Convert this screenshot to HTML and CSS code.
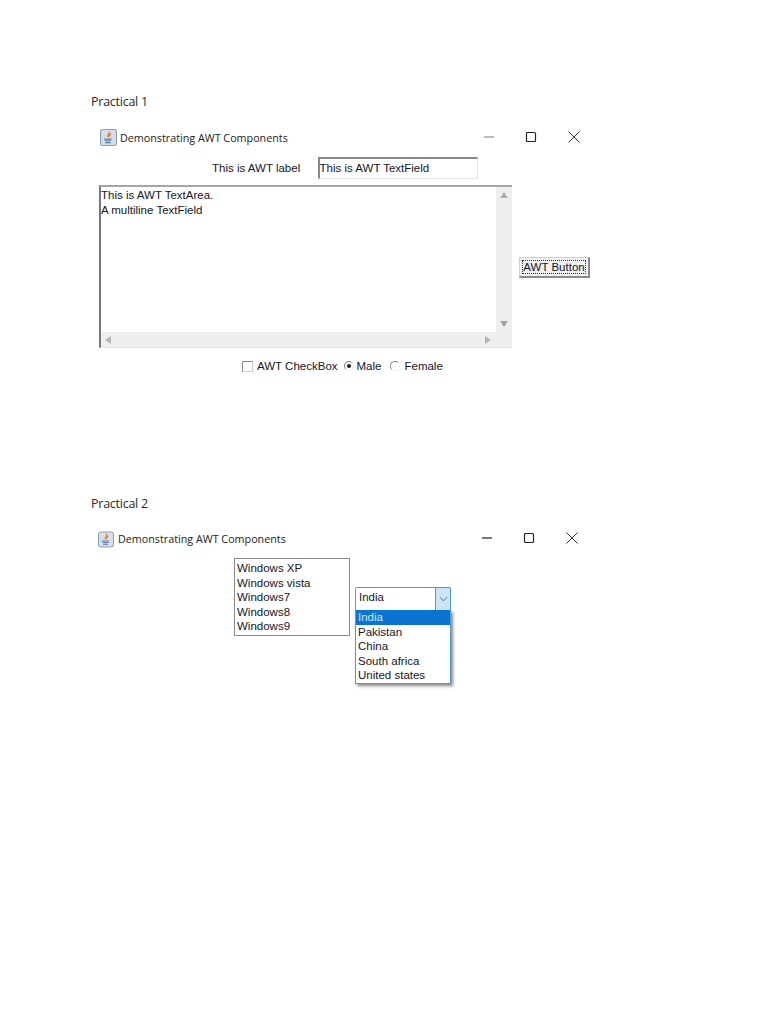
FILE: index.html
```html
<!DOCTYPE html>
<html lang="en">
<head>
<meta charset="utf-8">
<title>Practical</title>
<link rel="stylesheet" href="styles.css">
</head>
<body>
<main class="page">
  <section class="practical first">
    <h2 class="heading">Practical 1</h2>
    <div class="window">
      <div class="titlebar">
        <svg class="java" viewBox="0 0 16 16"><rect x=".5" y=".5" width="15" height="15" rx="2" fill="#d5dfea" stroke="#8d9db0"/><path d="M8.500 2.500c1 2-2 3-1 5M10 4c0 2-2 2-1.500 3.500" fill="none" stroke="#e8762c" stroke-width="1.200"/><path d="M4 9.500h7M4.500 11h6M5 12.800h5" stroke="#5b7ea6" stroke-width="1"/></svg>
        <span class="title">Demonstrating AWT Components</span>
        <span class="controls">
          <svg viewBox="0 0 14 14"><path d="M2 7h10" stroke="#777" stroke-width="1"/></svg>
          <svg viewBox="0 0 14 14"><rect x="2.500" y="2.500" width="9" height="9" rx="1" fill="none" stroke="#222" stroke-width="1.200"/></svg>
          <svg viewBox="0 0 14 14"><path d="M1.500 1.500l11 11M12.500 1.500l-11 11" stroke="#333" stroke-width="1"/></svg>
        </span>
      </div>
      <div class="label-row">
        <span class="label">This is AWT label</span>
        <span class="textfield">This is AWT TextField</span>
      </div>
      <div class="area-row">
        <div class="textarea">
          <div class="area-main">
            <div class="area-text">This is AWT TextArea.<br>A multiline TextField</div>
            <div class="vbar"><i class="arrow up"></i><i class="arrow down"></i></div>
          </div>
          <div class="hbar"><i class="arrow left"></i><i class="arrow right"></i></div>
        </div>
        <span class="button"><span class="button-focus">AWT Button</span></span>
      </div>
      <div class="check-row">
        <span class="checkbox"></span><span class="opt-awt">AWT CheckBox</span>
        <span class="radio on"></span><span class="opt-male">Male</span>
        <span class="radio"></span><span>Female</span>
      </div>
    </div>
  </section>

  <section class="practical second">
    <h2 class="heading">Practical 2</h2>
    <div class="window shifted">
      <div class="titlebar">
        <svg class="java" viewBox="0 0 16 16"><rect x=".5" y=".5" width="15" height="15" rx="2" fill="#d5dfea" stroke="#8d9db0"/><path d="M8.500 2.500c1 2-2 3-1 5M10 4c0 2-2 2-1.500 3.500" fill="none" stroke="#e8762c" stroke-width="1.200"/><path d="M4 9.500h7M4.500 11h6M5 12.800h5" stroke="#5b7ea6" stroke-width="1"/></svg>
        <span class="title">Demonstrating AWT Components</span>
        <span class="controls">
          <svg viewBox="0 0 14 14"><path d="M2 7h10" stroke="#222" stroke-width="1.200"/></svg>
          <svg viewBox="0 0 14 14"><rect x="2.500" y="2.500" width="9" height="9" rx="1" fill="none" stroke="#222" stroke-width="1.200"/></svg>
          <svg viewBox="0 0 14 14"><path d="M1.500 1.500l11 11M12.500 1.500l-11 11" stroke="#333" stroke-width="1"/></svg>
        </span>
      </div>
      <div class="choices">
        <ul class="list">
          <li>Windows XP</li>
          <li>Windows vista</li>
          <li>Windows7</li>
          <li>Windows8</li>
          <li>Windows9</li>
        </ul>
        <div class="combo">
          <div class="combo-head">
            <span class="combo-value">India</span>
            <span class="combo-btn"><svg viewBox="0 0 10 6"><path d="M1 1l4 4 4-4" fill="none" stroke="#56616b" stroke-width="1"/></svg></span>
          </div>
          <ul class="popup">
            <li class="selected">India</li>
            <li>Pakistan</li>
            <li>China</li>
            <li>South africa</li>
            <li>United states</li>
          </ul>
        </div>
      </div>
    </div>
  </section>
</main>
</body>
</html>
```
FILE: styles.css
```css
* { box-sizing: border-box; }
html, body { margin: 0; background: #fff; }
body { width: 768px; height: 1024px; overflow: hidden; font-family: "Liberation Sans", Arial, sans-serif; font-size: 11.500px; color: #15151f; }
ul { list-style: none; margin: 0; padding: 0; }
.page { padding: 94px 0 0 91px; }
.heading { margin: 0; height: 16px; font: 500 12.500px/16px "Open Sans", sans-serif; color: #2a2a2a; letter-spacing: -.25px; }
.second { margin-top: 122px; }
.window { margin: 19px 0 0 8px; width: 492px; }
.window.shifted { margin-left: 7px; width: 491px; }
.titlebar { display: flex; align-items: center; height: 17px; padding-left: 1px; }
.shifted .titlebar { padding-left: 0; }
.java { width: 17px; height: 17px; flex: none; }
.shifted .java { width: 16px; margin-right: 1px; }
.title { margin-left: 3px; font: 10.750px/17px "Open Sans", sans-serif; color: #222; white-space: nowrap; }
.first .title { margin-top: 2px; }
.controls { margin-left: auto; display: flex; gap: 28px; padding-right: 10px; position: relative; top: -1px; }
.shifted .controls { top: -2px; }
.controls svg { width: 14px; height: 14px; display: block; }
.controls svg:last-child { margin-left: 1px; }
.label-row { display: flex; align-items: center; height: 22px; margin-top: 11px; padding-left: 113px; }
.label { width: 105.500px; white-space: nowrap; }
.textfield { width: 160px; height: 22px; line-height: 18px; padding-left: 0; border: 1px solid #e3e3e3; border-top: 2px solid #8a8a8a; border-left: 2px solid #8a8a8a; }
.area-row { display: flex; align-items: center; margin-top: 6px; }
.textarea { width: 413px; height: 163px; display: flex; flex-direction: column; border-left: 2px solid #777; border-top: 2px solid #a5a5a5; border-bottom: 1px solid #e4e4e4; }
.area-main { flex: 1; display: flex; min-height: 0; }
.area-text { flex: 1; padding: 1px 0 0 0; line-height: 14.500px; }
.vbar { width: 16px; background: #efefef; display: flex; flex-direction: column; justify-content: space-between; align-items: center; padding: 5px 0 5px; }
.hbar { height: 15px; background: #efefef; display: flex; justify-content: space-between; align-items: center; padding: 0 21px 0 4px; }
.arrow { display: block; width: 0; height: 0; border: 4px solid transparent; }
.arrow.up { border-top: 0; border-bottom: 6px solid #b0b0b0; }
.arrow.down { border-bottom: 0; border-top: 6px solid #a5a5a5; }
.arrow.left { border-left: 0; border-right: 6px solid #b5b5b5; }
.arrow.right { border-right: 0; border-left: 6px solid #b5b5b5; }
.button { margin: 0 0 0 7px; width: 71px; height: 21px; padding: 2px; background: #f0f0f0; border: 1px solid #d0d0d0; border-right: 2px solid #8a8a8a; border-bottom: 2px solid #8a8a8a; position: relative; top: 1px; }
.button-focus { display: block; height: 100%; line-height: 13px; text-align: center; border: 1px dotted #333; white-space: nowrap; }
.check-row { display: flex; align-items: center; height: 16px; margin-top: 10px; padding-left: 143px; white-space: nowrap; }
.checkbox { width: 11px; height: 11px; border: 1px solid #8a8a8a; border-right-color: #ccc; border-bottom-color: #ccc; margin-right: 4px; }
.opt-awt { margin-right: 6px; }
.opt-male { margin-right: 9px; }
.radio { width: 10px; height: 10px; border-radius: 50%; border: 1px solid #888; border-right-color: #eee; border-bottom-color: #eee; margin-right: 3px; position: relative; }
.radio:not(.on) { margin-right: 4px; }
.radio.on::after { content: ""; position: absolute; left: 2px; top: 2px; width: 4px; height: 4px; border-radius: 50%; background: #222; }
.choices { display: flex; align-items: flex-start; margin: 10px 0 0 136px; }
.list { width: 116px; height: 78px; border: 1px solid #8a8a8a; padding: 2px 2px; line-height: 14.600px; }
.combo { width: 96px; margin: 29px 0 0 5px; }
.combo-head { height: 23px; display: flex; background: #fff; border: 1.500px solid #4a9ad8; border-bottom: 0; border-radius: 2px 2px 0 0; }
.combo-value { flex: 1; padding: 3px 0 0 3px; }
.combo-btn { width: 15px; background: #cde4f7; border-left: 1px solid #4a9ad8; display: flex; align-items: center; justify-content: center; }
.combo-btn svg { width: 9px; height: 6px; }
.popup { height: 74px; border: 1.500px solid #4a9ad8; border-top: 0; line-height: 14.600px; box-shadow: 2px 2px 3px #888; background: #fff; padding: 0 1px; }
.popup li { padding-left: 1px; }
.popup .selected { background: #0a74d0; color: #cfe6fb; margin: 0 -1px; padding-left: 2px; }
```
